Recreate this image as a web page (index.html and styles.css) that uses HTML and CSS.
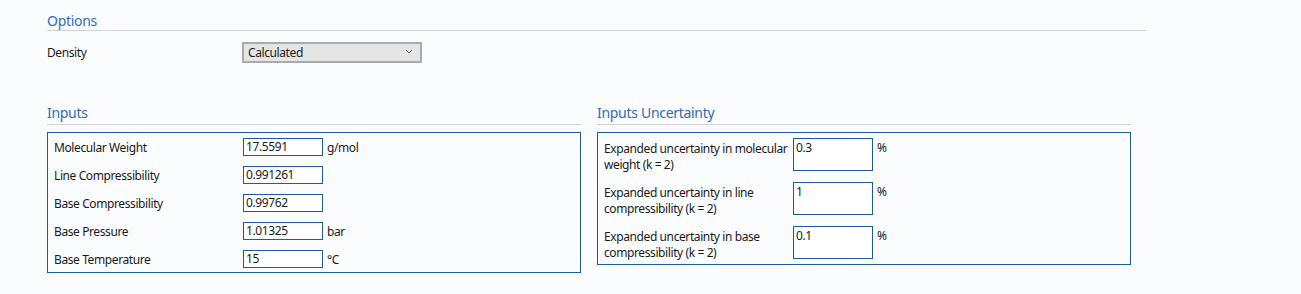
FILE: index.html
```html
<!DOCTYPE html>
<html>
<head>
<meta charset="utf-8">
<link rel="stylesheet" href="styles.css">
</head>
<body>
<div class="page">
  <section class="options">
    <h2 class="head head-wide">Options</h2>
    <div class="density-row">
      <span class="label density-label">Density</span>
      <div class="select">
        <span>Calculated</span>
        <svg class="chev" width="8" height="5" viewBox="0 0 8 5"><path d="M1 1 L4 4 L7 1" fill="none" stroke="#666" stroke-width="1"/></svg>
      </div>
    </div>
  </section>
  <div class="columns">
    <section class="col">
      <h2 class="head col-head">Inputs</h2>
      <div class="box box-left">
        <div class="row"><span class="label lname">Molecular Weight</span><span class="tb">17.5591</span><span class="unit">g/mol</span></div>
        <div class="row"><span class="label lname">Line Compressibility</span><span class="tb">0.991261</span></div>
        <div class="row"><span class="label lname">Base Compressibility</span><span class="tb">0.99762</span></div>
        <div class="row"><span class="label lname">Base Pressure</span><span class="tb">1.01325</span><span class="unit">bar</span></div>
        <div class="row"><span class="label lname">Base Temperature</span><span class="tb">15</span><span class="unit">°C</span></div>
      </div>
    </section>
    <section class="col">
      <h2 class="head col-head">Inputs Uncertainty</h2>
      <div class="box box-right">
        <div class="urow"><span class="label uname">Expanded uncertainty in molecular weight (k = 2)</span><span class="tb tb-tall">0.3</span><span class="unit">%</span></div>
        <div class="urow"><span class="label uname">Expanded uncertainty in line compressibility (k = 2)</span><span class="tb tb-tall">1</span><span class="unit">%</span></div>
        <div class="urow"><span class="label uname">Expanded uncertainty in base compressibility (k = 2)</span><span class="tb tb-tall">0.1</span><span class="unit">%</span></div>
      </div>
    </section>
  </div>
</div>
</body>
</html>
```

FILE: styles.css
```css
html, body {
  margin: 0;
  padding: 0;
  background: #fbfcfe;
}
body {
  font-family: "Noto Sans", "Open Sans", sans-serif;
  font-size: 12px;
  letter-spacing: -0.4px;
  color: #1a1a1a;
}
.page {
  padding: 12px 0 0 47px;
  width: 1099px;
}
.head {
  margin: 0;
  font-weight: normal;
  font-size: 14px;
  letter-spacing: -0.3px;
  line-height: 18px;
  color: #2e6cb7;
  border-bottom: 1px solid #cfd2d6;
  padding-bottom: 0;
}
.col-head {
  padding-bottom: 2px;
}
.head-wide {
  width: 1099px;
}
.density-row {
  display: flex;
  align-items: center;
  margin-top: 11px;
  height: 21px;
}
.density-label {
  width: 195px;
}
.label {
  line-height: 15px;
}
.select {
  height: 17px;
  border: 2px solid #ababab;
  background: #e5e5e5;
  display: flex;
  align-items: center;
  justify-content: space-between;
  padding: 0 7px 0 4px;
  box-sizing: content-box;
  width: 165px;
}
.chev {
  display: block;
  margin-top: -2px;
}
.columns {
  display: flex;
  gap: 16px;
  margin-top: 41px;
}
.col {
  width: 534px;
  display: flex;
  flex-direction: column;
}
.box {
  margin-top: 7px;
  border: 1px solid #1d5b9c;
  box-sizing: border-box;
}
.box-left {
  height: 141px;
  padding: 5px 0 0 6px;
}
.box-right {
  height: 133px;
  padding: 5px 0 0 6px;
}
.row {
  display: flex;
  align-items: center;
  height: 18px;
  margin-bottom: 10px;
}
.lname {
  width: 189px;
}
.tb {
  box-sizing: border-box;
  width: 80px;
  height: 18px;
  border: 1px solid #1d5b9c;
  background: #ffffff;
  padding: 0 0 0 2px;
  line-height: 16px;
  font-size: 12px;
}
.unit {
  margin-left: 4px;
}
.urow {
  display: flex;
  align-items: flex-start;
  height: 33px;
  margin-bottom: 11px;
}
.uname {
  width: 189px;
  padding-top: 3px;
  line-height: 16px;
}
.tb-tall {
  height: 33px;
  padding-top: 1px;
}
.urow .unit {
  padding-top: 1px;
}
```
